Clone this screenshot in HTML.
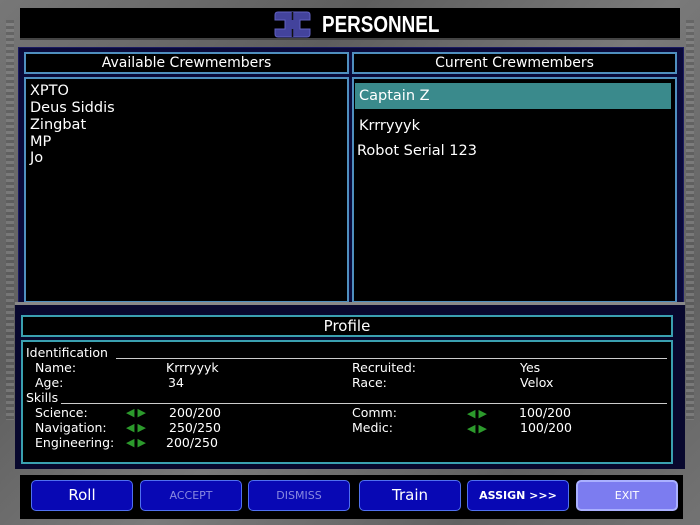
<!DOCTYPE html>
<html><head><meta charset="utf-8"><style>
*{margin:0;padding:0;box-sizing:border-box}
body{width:700px;height:525px;overflow:hidden;background:#6e6e6e;position:relative;font-family:"DejaVu Sans","Liberation Sans",sans-serif;color:#fff}
.a{position:absolute}
.box{position:absolute;background:#000;border:2px solid #4f8fbf}
.hdr{font-size:14px;text-align:center;line-height:18px}
.li{position:absolute;font-size:14.5px;line-height:16px}
.t{position:absolute;font-size:12.5px;line-height:14px}
.btn{position:absolute;top:480px;height:31px;background:#0808b4;border:1px solid #5070f0;border-radius:5px;text-align:center;line-height:29px;font-size:15px}
.arr{position:absolute;font-size:11px;color:#2c9a2c;letter-spacing:3px}
</style></head><body>
<div class="a" style="left:0;top:0;width:700px;height:525px;background:linear-gradient(135deg,#777 0%,#5e5e5e 30%,#7a7a7a 55%,#616161 80%,#737373 100%)"></div>
<div class="a" style="left:6px;top:20px;width:8px;height:400px;background:repeating-linear-gradient(#555 0 3px,#8a8a8a 3px 6px);opacity:.5"></div>
<div class="a" style="left:686px;top:20px;width:8px;height:400px;background:repeating-linear-gradient(#555 0 3px,#8a8a8a 3px 6px);opacity:.5"></div>
<div class="a" style="left:20px;top:8px;width:660px;height:32px;background:#000;border-bottom:2px solid #444"></div>
<svg class="a" style="left:273px;top:10px" width="39" height="29" viewBox="0 0 39 29"><path d="M5 2H34Q37 2 37 5V10H27V19H37V24Q37 27 34 27H5Q2 27 2 24V19H12V10H2V5Q2 2 5 2Z" fill="#43439c" stroke="#6060c0" stroke-width="1"/><path d="M19.5 2V10M19.5 19V27" stroke="#111" stroke-width="1.5"/></svg>
<div class="a" style="left:322px;top:10px;font-family:'Liberation Sans Narrow','Liberation Sans',sans-serif;font-weight:bold;font-size:23px;transform:scaleX(0.82);transform-origin:left;line-height:28px">PERSONNEL</div>
<div class="a" style="left:18px;top:47px;width:666px;height:258px;background:#0a0a3a;border:1px solid #1a1a60"></div>
<div class="box hdr" style="left:24px;top:52px;width:325px;height:22px">Available Crewmembers</div>
<div class="box hdr" style="left:352px;top:52px;width:325px;height:22px">Current Crewmembers</div>
<div class="box" style="left:24px;top:77px;width:325px;height:226px"></div>
<div class="box" style="left:352px;top:77px;width:325px;height:226px"></div>
<div class="li" style="left:30px;top:83px">XPTO</div>
<div class="li" style="left:30px;top:100px">Deus Siddis</div>
<div class="li" style="left:30px;top:117px">Zingbat</div>
<div class="li" style="left:30px;top:134px">MP</div>
<div class="li" style="left:30px;top:150px">Jo</div>
<div class="a" style="left:355px;top:83px;width:316px;height:26px;background:#3a8a8c"></div>
<div class="li" style="left:359px;top:88px">Captain Z</div>
<div class="li" style="left:359px;top:118px">Krrryyyk</div>
<div class="li" style="left:357px;top:143px">Robot Serial 123</div>
<div class="a" style="left:15px;top:302px;width:670px;height:167px;background:#08082e;border-top:3px solid #888"></div>
<div class="box hdr" style="left:21px;top:315px;width:652px;height:22px;border-color:#3aa0b0;line-height:19px;font-size:15px">Profile</div>
<div class="box" style="left:21px;top:340px;width:652px;height:124px;border-color:#3aa0b0"></div>
<div class="t" style="left:26px;top:346px">Identification</div>
<div class="a" style="left:116px;top:358px;width:551px;height:1px;background:#ccc"></div>
<div class="t" style="left:35px;top:361px">Name:</div>
<div class="t" style="left:166px;top:361px">Krrryyyk</div>
<div class="t" style="left:352px;top:361px">Recruited:</div>
<div class="t" style="left:520px;top:361px">Yes</div>
<div class="t" style="left:35px;top:376px">Age:</div>
<div class="t" style="left:168px;top:376px">34</div>
<div class="t" style="left:352px;top:376px">Race:</div>
<div class="t" style="left:520px;top:376px">Velox</div>
<div class="t" style="left:26px;top:391px">Skills</div>
<div class="a" style="left:61px;top:403px;width:606px;height:1px;background:#ccc"></div>
<div class="t" style="left:35px;top:406px">Science:</div>
<div class="arr" style="left:126px;top:406px">◀▶</div>
<div class="t" style="left:169px;top:406px">200/200</div>
<div class="t" style="left:352px;top:406px">Comm:</div>
<div class="arr" style="left:467px;top:407px">◀▶</div>
<div class="t" style="left:519px;top:406px">100/200</div>
<div class="t" style="left:35px;top:421px">Navigation:</div>
<div class="arr" style="left:126px;top:421px">◀▶</div>
<div class="t" style="left:169px;top:421px">250/250</div>
<div class="t" style="left:352px;top:421px">Medic:</div>
<div class="arr" style="left:467px;top:422px">◀▶</div>
<div class="t" style="left:520px;top:421px">100/200</div>
<div class="t" style="left:35px;top:436px">Engineering:</div>
<div class="arr" style="left:126px;top:436px">◀▶</div>
<div class="t" style="left:166px;top:436px">200/250</div>
<div class="a" style="left:20px;top:475px;width:663px;height:44px;background:#000"></div>
<div class="btn" style="left:31px;width:102px">Roll</div>
<div class="btn" style="left:140px;width:102px;color:#8a8ae0;font-size:11px">ACCEPT</div>
<div class="btn" style="left:248px;width:102px;color:#8a8ae0;font-size:11px">DISMISS</div>
<div class="btn" style="left:359px;width:102px">Train</div>
<div class="btn" style="left:467px;width:102px;font-size:11px;font-weight:bold">ASSIGN &gt;&gt;&gt;</div>
<div class="btn" style="left:576px;width:102px;background:#7c7cf0;border:2px solid #aab0ff;font-size:11px;line-height:27px">EXIT</div>
</body></html>
